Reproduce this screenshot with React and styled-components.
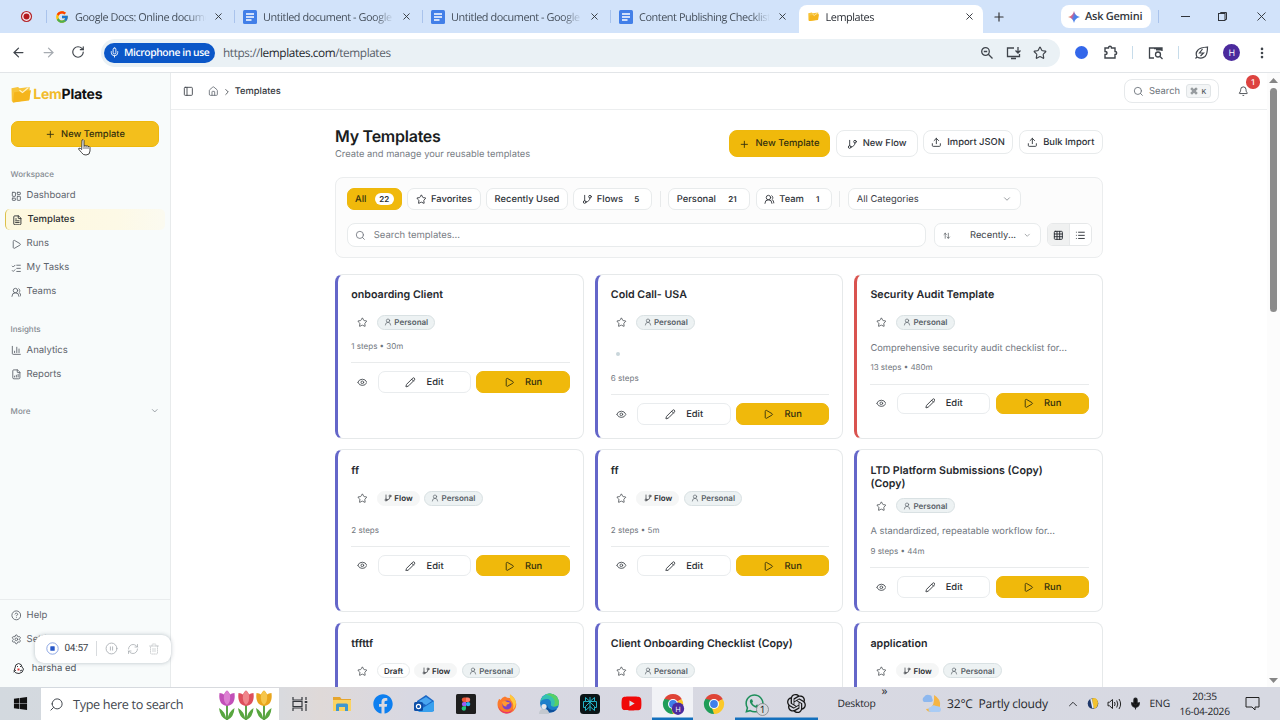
import React from "react";
import styled, { createGlobalStyle, css } from "styled-components";
import {
  ArrowLeft,
  ArrowRight,
  ArrowUpDown,
  Bell,
  ChartColumn,
  ChevronDown,
  ChevronRight,
  ChevronUp,
  CircleHelp,
  CirclePause,
  Command,
  EllipsisVertical,
  Eye,
  FileChartColumnIncreasing,
  FileText,
  GitBranch,
  Grid3x3,
  House,
  LayoutDashboard,
  List,
  ListChecks,
  Mic,
  PanelLeft,
  Pencil,
  Play,
  Plus,
  RefreshCw,
  RotateCw,
  Search,
  Settings,
  Star,
  Trash2,
  Upload,
  UserRound,
  UsersRound,
  X,
} from "lucide-react";
import { FcGoogle } from "react-icons/fc";
import { FaFacebook, FaWhatsapp, FaWindows, FaYoutube } from "react-icons/fa";
import { RiOpenaiFill } from "react-icons/ri";

const GlobalStyle = createGlobalStyle`
  * {
    box-sizing: border-box;
  }
  body {
    margin: 0;
    overflow: hidden;
    text-rendering: geometricPrecision;
  }
  button {
    text-rendering: inherit;
  }
  svg {
    display: block;
    flex: none;
  }
`;

const system = `"Open Sans", "Noto Sans", sans-serif`;

const Screen = styled.div`
  position: relative;
  width: 1280px;
  height: 720px;
  display: flex;
  flex-direction: column;
  overflow: hidden;
  background: #fff;
  font-family: Inter, sans-serif;
  color: #23272e;
`;

/* ---------- browser ---------- */

const TabStrip = styled.div`
  height: 33px;
  flex: none;
  display: flex;
  align-items: center;
  background: #d2e3fa;
  font-family: ${system};
`;

const PinnedTab = styled.div`
  width: 46px;
  padding-left: 20px;
`;

const Tab = styled.div`
  width: 188px;
  height: 33px;
  display: flex;
  align-items: center;
  gap: 6px;
  color: #46505c;
  &::before {
    content: "";
    width: 1px;
    height: 13px;
    margin-right: 2px;
    background: #a9c3ec;
  }
`;

const ActiveTab = styled.div`
  width: 184px;
  height: 28px;
  align-self: flex-end;
  margin-left: 1px;
  padding: 0 8px 5px 9px;
  display: flex;
  align-items: center;
  gap: 6.5px;
  background: #fff;
  border-radius: 8px 8px 0 0;
  color: #2b2f36;
  margin-right: 9px;
`;

const TabTitle = styled.span`
  width: 132px;
  padding-top: 1px;
  font-size: 10.9px;
  white-space: nowrap;
  overflow: hidden;
  letter-spacing: -0.45px;
  mask-image: linear-gradient(90deg, #000 112px, transparent 131px);
`;

const Gemini = styled.div`
  height: 23px;
  width: 90px;
  margin-left: auto;
  display: flex;
  align-items: center;
  gap: 5px;
  padding-left: 7px;
  border-radius: 8px;
  background: #fff;
  font-size: 11px;
  font-weight: 600;
  color: #33373d;
  letter-spacing: -0.25px;
  white-space: nowrap;
`;

const WindowButtons = styled.div`
  width: 129px;
  display: flex;
  align-items: center;
  padding-left: 7px;
  gap: 21px;
  color: #30343a;
  &::before {
    content: "";
    width: 1px;
    height: 13px;
    background: #a9c3ec;
  }
`;

const Toolbar = styled.div`
  height: 40px;
  flex: none;
  display: flex;
  align-items: center;
  padding: 0 12px 0 11px;
  border-bottom: 1px solid #e2e5e8;
  color: #3f444b;
  font-family: ${system};
`;

const NavButtons = styled.div`
  width: 90px;
  display: flex;
  gap: 15px;
`;

const AddressBar = styled.div`
  width: 959px;
  height: 28px;
  display: flex;
  align-items: center;
  padding: 0 13px 0 3px;
  border-radius: 14px;
  background: #eaf1f5;
`;

const MicChip = styled.div`
  width: 111px;
  height: 20px;
  display: flex;
  align-items: center;
  gap: 4px;
  padding-left: 5px;
  border-radius: 10px;
  background: #0b57c8;
  color: #fff;
  font-size: 10.3px;
  font-weight: 600;
  letter-spacing: -0.4px;
  white-space: nowrap;
`;

const Url = styled.div`
  margin-left: 8px;
  padding-top: 1px;
  font-size: 11.8px;
  letter-spacing: -0.4px;
  color: #5a626b;
  b {
    font-weight: 400;
    color: #23272c;
  }
`;

const AddressIcons = styled.div`
  margin-left: auto;
  display: flex;
  align-items: center;
  gap: 12px;
`;

const Extensions = styled.div`
  flex: 1;
  display: flex;
  align-items: center;
  justify-content: space-between;
  padding-left: 15px;
`;

const BlueDot = styled.span`
  width: 13px;
  height: 13px;
  border-radius: 50%;
  background: #3367ea;
`;

const ToolbarRule = styled.span`
  width: 1px;
  height: 13px;
  background: #c7dcea;
`;

const Profile = styled.span`
  width: 17px;
  height: 17px;
  display: grid;
  place-items: center;
  border-radius: 50%;
  background: #4b2a9d;
  color: #fff;
  font-size: 9px;
`;

/* ---------- app shell ---------- */

const Page = styled.div`
  height: 614px;
  display: flex;
  overflow: hidden;
`;

const Sidebar = styled.aside`
  width: 171px;
  flex: none;
  display: flex;
  flex-direction: column;
  padding: 10px 5.3px 0;
  background: #f8fbfb;
  border-right: 1px solid #e8ebec;
`;

const Brand = styled.div`
  height: 21px;
  display: flex;
  align-items: center;
  gap: 2px;
  padding: 1px 0 0 6px;
  font-size: 14px;
  font-weight: 700;
  letter-spacing: -0.25px;
  color: #111;
  span {
    color: #f2bb2b;
  }
`;

const yellow = css`
  background: #f0b90b;
  border: 1px solid #eeb80c;
  color: #33300f;
`;

const SidebarButton = styled.button`
  ${yellow}
  background: #f3bf1c;
  height: 26.7px;
  margin: 16.6px 5.3px 16.2px;
  padding: 1px 0 0;
  display: flex;
  align-items: center;
  justify-content: center;
  gap: 5.3px;
  border-radius: 7px;
  font: 500 9.35px Inter, sans-serif;
`;

const NavLabel = styled.div`
  height: 21.3px;
  display: flex;
  align-items: center;
  justify-content: space-between;
  padding: 0 5.3px;
  font-size: 8px;
  font-weight: 500;
  color: #848a91;
`;

const NavGroup = styled.nav`
  display: flex;
  flex-direction: column;
  gap: 2.7px;
  margin-bottom: 16px;
`;

const NavItem = styled.a`
  height: 21.3px;
  display: flex;
  align-items: center;
  gap: 5.3px;
  padding: 1px 5.3px 0;
  border-radius: 5px;
  font-size: 9.5px;
  color: #5e646c;
  ${(p) =>
    p.$active &&
    css`
      color: #2a2d2f;
      font-weight: 500;
      background: linear-gradient(90deg, #fdf8de, #fdf9e6 70%, #fbfaf0);
      border-left: 1.5px solid #dcc04a;
    `}
`;

const SidebarFooter = styled.div`
  margin: auto -5.3px 0;
  height: 88.5px;
  padding: 5px 5.3px 0;
  display: flex;
  flex-direction: column;
  gap: 2.7px;
  border-top: 1px solid #e9eced;
`;

const UserRow = styled.div`
  height: 32px;
  display: flex;
  align-items: center;
  gap: 6.5px;
  padding: 1px 0 0 7px;
  font-size: 9.5px;
  color: #4d535a;
`;

const Main = styled.main`
  flex: 1;
  min-width: 0;
  display: flex;
  flex-direction: column;
  overflow: hidden;
`;

const Header = styled.header`
  height: 37px;
  flex: none;
  display: flex;
  align-items: center;
  padding: 0 18px 0 11.5px;
  border-bottom: 1px solid #eceeef;
`;

const Crumbs = styled.div`
  display: flex;
  align-items: center;
  margin-left: 14.5px;
  padding-top: 1px;
  gap: 3.2px;
  font-size: 9.3px;
  font-weight: 500;
  color: #6d737a;
  b {
    color: #34383d;
    font-weight: 500;
  }
`;

const SearchButton = styled.button`
  height: 24.5px;
  width: 95px;
  margin-left: auto;
  display: flex;
  align-items: center;
  gap: 5px;
  padding: 0 7.5px 0 8px;
  border: 1px solid #e6e9eb;
  border-radius: 8px;
  background: #fff;
  color: #6c737a;
  font: 400 9.4px Inter, sans-serif;
`;

const Kbd = styled.kbd`
  height: 14px;
  width: 25px;
  margin-left: auto;
  display: flex;
  align-items: center;
  justify-content: center;
  gap: 3px;
  border: 1px solid #e0e4e6;
  border-radius: 3px;
  background: #f3f5f6;
  color: #50565c;
  font: 500 7px Inter, sans-serif;
`;

const BellButton = styled.div`
  position: relative;
  margin-left: 19px;
  color: #3b4046;
`;

const BellCount = styled.span`
  position: absolute;
  left: 8px;
  top: -10.5px;
  width: 13.4px;
  height: 13.4px;
  display: grid;
  place-items: center;
  border-radius: 50%;
  background: #dd4340;
  color: #fff;
  font-size: 8px;
  font-weight: 500;
`;

const Scrollbar = styled.div`
  width: 13px;
  flex: none;
  display: flex;
  flex-direction: column;
  align-items: center;
  padding: 5px 0 4px;
  background: #fcfcfc;
`;

const Thumb = styled.div`
  width: 7px;
  height: 224px;
  margin: 5px 0 auto;
  border-radius: 4px;
  background: #8b8b8b;
`;

const Content = styled.div`
  width: 768px;
  margin: 0 auto;
  padding-top: 20px;
  display: flex;
  flex-direction: column;
`;

const TitleRow = styled.div`
  height: 47px;
  display: flex;
  justify-content: space-between;
  align-items: flex-start;
`;

const Title = styled.h1`
  margin: -4px 0 0;
  font-size: 16px;
  line-height: 20px;
  font-weight: 600;
  letter-spacing: -0.25px;
  color: #1a1d21;
`;

const Subtitle = styled.p`
  margin: 2.2px 0 0;
  font-size: 9.35px;
  line-height: 13.3px;
  color: #777d84;
`;

const Actions = styled.div`
  display: flex;
  align-items: flex-start;
  gap: 5.3px;
`;

const ActionButton = styled.button`
  height: ${(p) => (p.$tall ? "26.7px" : "24px")};
  width: ${(p) => p.$width}px;
  padding: ${(p) => (p.$tall ? "1px 0 0" : "0")};
  display: flex;
  align-items: center;
  justify-content: center;
  gap: 5.3px;
  border: 1px solid #e8ebec;
  border-radius: 8px;
  background: #fff;
  color: #2e3238;
  font: 500 9.4px Inter, sans-serif;
  white-space: nowrap;
  ${(p) => p.$primary && yellow}
`;

const FilterPanel = styled.section`
  height: 81px;
  margin-bottom: 15.8px;
  padding: 10px 10.5px;
  border: 1px solid #ebedee;
  border-radius: 8px;
  background: #fcfcfc;
`;

const FilterRow = styled.div`
  display: flex;
  align-items: center;
  gap: ${(p) => p.$gap || "5.3px"};
  margin-bottom: 13.4px;
`;

const Chip = styled.button`
  height: 21.5px;
  width: ${(p) => p.$width}px;
  display: flex;
  align-items: center;
  padding: 0.7px 7.5px 0;
  gap: 4.5px;
  border: 1px solid #e8ebec;
  border-radius: 7px;
  background: #fff;
  color: #30343a;
  font: 500 9.4px Inter, sans-serif;
  white-space: nowrap;
  ${(p) => p.$primary && yellow}
`;

const Count = styled.span`
  min-width: 18.7px;
  height: 12px;
  margin: -1px 0 0 auto;
  display: grid;
  place-items: center;
  border-radius: 6px;
  background: #fff;
  font-size: 8px;
  font-weight: 600;
  color: #2b2f34;
`;

const Rule = styled.span`
  width: 1px;
  height: 16px;
  margin: 0 2.3px;
  background: #e8eaeb;
`;

const Select = styled.div`
  width: ${(p) => p.$width}px;
  height: ${(p) => p.$height}px;
  display: flex;
  align-items: center;
  justify-content: space-between;
  padding: 1px 8px 0;
  border: 1px solid #e8ebec;
  border-radius: 7px;
  background: #fff;
  font-size: 9.4px;
  color: #3c4147;
`;

const SearchField = styled.div`
  flex: 1;
  height: 24px;
  display: flex;
  align-items: center;
  gap: 8px;
  padding: 1px 7.5px 0;
  border: 1px solid #e8ebec;
  border-radius: 8px;
  background: #fff;
  font-size: 9.5px;
  color: #777c83;
`;

const SortValue = styled.span`
  margin: 0 -12px 0 0;
`;

const ViewToggle = styled.div`
  width: 45px;
  height: 23px;
  display: flex;
  border: 1px solid #e6e8e9;
  border-radius: 6px;
  overflow: hidden;
  background: #fff;
  margin-left: -2.3px;
`;

const ViewOption = styled.span`
  flex: 1;
  display: grid;
  place-items: center;
  background: ${(p) => (p.$active ? "#f0f1f1" : "#fff")};
  & + & {
    border-left: 1px solid #e6e8e9;
  }
`;

/* ---------- cards ---------- */

const CardGrid = styled.div`
  display: grid;
  grid-template-columns: repeat(3, 1fr);
  gap: 10.7px;
`;

const Card = styled.article`
  padding: 13px 13.3px;
  border: 1px solid #e6e9ea;
  border-left: 3px solid ${(p) => (p.$danger ? "#d9534f" : "#6466c9")};
  border-radius: 8px;
  background: #fff;
`;

const CardTitle = styled.h2`
  min-height: 18.7px;
  margin: 0 0 4.6px;
  padding-top: 0.7px;
  font-size: 10.67px;
  line-height: 13.3px;
  font-weight: 600;
  color: #25282d;
  max-width: 190px;
  min-height: 19.4px;
`;

const BadgeRow = styled.div`
  height: 21.3px;
  display: flex;
  align-items: center;
  gap: 4.2px;
  margin-bottom: 8px;
`;

const IconButton = styled.span`
  width: 21.3px;
  height: 21.3px;
  display: grid;
  place-items: center;
  color: #484d53;
`;

const Badge = styled.span`
  height: 15px;
  display: flex;
  align-items: center;
  gap: 2.4px;
  padding: 0 6.2px;
  border: 1px solid;
  border-radius: 8px;
  font-size: 8px;
  font-weight: 600;
  ${(p) =>
    ({
      personal: "background: #edf2f3; border-color: #d9e1e3; color: #596168;",
      flow: "background: #f5f6f6; border-color: #f5f6f6; color: #2b2e33;",
      draft: "background: #fff; border-color: #e8ebec; color: #2b2e33;",
    })[p.$kind]}
`;

const Description = styled.div`
  height: ${(p) => p.$height}px;
  margin-bottom: 8px;
  display: flex;
  align-items: center;
  padding-top: ${(p) => (p.$height ? "1.2px" : "0")};
  font-size: 9.35px;
  color: #72787f;
  white-space: nowrap;
`;

const Bullet = styled.span`
  width: 4px;
  height: 4px;
  margin-left: 5px;
  border-radius: 50%;
  background: #c9d6db;
`;

const Meta = styled.div`
  height: 10.7px;
  line-height: 10.7px;
  margin-bottom: 10.7px;
  font-size: 8px;
  color: #6f757c;
`;

const CardActions = styled.div`
  display: flex;
  gap: 5.3px;
  padding-top: 8px;
  border-top: 1px solid #e9ebec;
`;

const CardButton = styled.button`
  flex: 1;
  height: 21.3px;
  padding: 0.7px 0 0;
  display: flex;
  align-items: center;
  justify-content: center;
  gap: 10.5px;
  border: 1px solid #e9ecee;
  border-radius: 7px;
  background: #fff;
  color: #2b2f35;
  font: 500 9.4px Inter, sans-serif;
  ${(p) => p.$primary && yellow}
`;

/* ---------- overlays ---------- */

const Recorder = styled.div`
  position: absolute;
  left: 35px;
  top: 634.5px;
  width: 136px;
  height: 28px;
  display: flex;
  align-items: center;
  padding: 0 11px 0 10.5px;
  border-radius: 9px;
  background: #fff;
  box-shadow: 0 0 4px rgba(40, 60, 80, 0.3);
  font: 400 10px Roboto, sans-serif;
  color: #3c4147;
  svg {
    color: #a4a9ae;
  }
`;

const RecorderTime = styled.span`
  margin: 0 7.5px 0 6px;
  padding-right: 8px;
  height: 15px;
  line-height: 15px;
  letter-spacing: -0.25px;
  border-right: 1px solid #d8dbde;
`;

const RecorderIcons = styled.div`
  flex: 1;
  display: flex;
  align-items: center;
  justify-content: space-between;
`;

const Pointer = styled.svg`
  position: absolute;
  left: 77px;
  top: 138px;
`;

/* ---------- taskbar ---------- */

const Taskbar = styled.footer`
  height: 33px;
  flex: none;
  display: flex;
  align-items: center;
  background: linear-gradient(90deg, #d3d9df, #d9dade 22%, #dfd9d8 25%, #d8d8e2 32%, #d7d9e2);
  font-family: ${system};
  color: #25272b;
`;

const Start = styled.div`
  width: 41px;
  padding-left: 13px;
`;

const TaskSearch = styled.div`
  width: 238px;
  height: 32px;
  align-self: flex-end;
  display: flex;
  align-items: center;
  padding: 0 3px 0 8px;
  gap: 9px;
  background: #fff;
  font-size: 12.7px;
  letter-spacing: -0.35px;
  color: #444950;
  svg:last-child {
    margin-left: auto;
  }
`;

const Apps = styled.div`
  display: flex;
  height: 33px;
  margin-left: 0.5px;
`;

const AppSlot = styled.div`
  width: 41.4px;
  display: grid;
  place-items: center;
  background: ${(p) => (p.$active ? "#f1f2f6" : "transparent")};
  box-shadow: ${(p) => (p.$open ? "inset 0 -2.5px #1470bd" : "none")};
`;

const DesktopLabel = styled.div`
  margin-left: 20px;
  width: 64px;
  display: flex;
  align-items: center;
  gap: 6px;
  font-size: 10.3px;
  letter-spacing: -0.25px;
`;

const Overflow = styled.span`
  align-self: flex-start;
  margin-top: -15px;
  font-size: 12px;
`;

const Weather = styled.div`
  width: 145px;
  display: flex;
  align-items: center;
  gap: 5.5px;
  margin-left: 19px;
  font-size: 12.1px;
  letter-spacing: -0.25px;
  white-space: pre;
`;

const Tray = styled.div`
  width: 112px;
  display: flex;
  align-items: center;
  gap: 7.5px;
  font-size: 10.3px;
  letter-spacing: -0.2px;
`;

const Clock = styled.div`
  width: 54px;
  text-align: center;
  font-size: 10.2px;
  line-height: 15px;
  letter-spacing: -0.3px;
  margin-top: 1px;
  white-space: nowrap;
`;

function FolderIcon({ width = 20 }) {
  return (
    <svg width={width} height={width * 0.85} viewBox="0 0 20 17">
      <path d="M.5 2.2 7 1l1.5 1.3L18.6 1v12.5L2 16.5.8 15z" fill="#f7c43a" />
      <path d="M3.2 6.2 20 4.2l-2 10.2L2 16.6z" fill="#f5b51c" />
      <path d="m8.5 4.2 3 2.3 6-5" stroke="#fff3cc" strokeWidth="1.2" fill="none" />
    </svg>
  );
}

function DocIcon() {
  return (
    <svg width="14" height="14" viewBox="0 0 14 14">
      <rect width="14" height="14" rx="1.5" fill="#427fe8" />
      <path d="M3 4h8M3 7h8M3 10h5.5" stroke="#fff" strokeWidth="1.3" />
    </svg>
  );
}

function ChromeIcon({ initial }) {
  return (
    <svg width="24" height="24" viewBox="0 0 24 24">
      <path d="M12 12 3.3 7A10 10 0 0 1 20.7 7z" fill="#df4437" />
      <path d="M12 12 20.7 7A10 10 0 0 1 12 22z" fill="#fbc929" />
      <path d="M12 12v10A10 10 0 0 1 3.3 7z" fill="#1f9d58" />
      <path d="M12 7h8.7L16 8.500z" fill="#df4437" />
      <path d="m16.3 14.5-4.3 7.5-2-6z" fill="#fbc929" />
      <path d="M7.7 14.5 3.3 7l6 1z" fill="#1f9d58" />
      <circle cx="12" cy="12" r="5" fill="#fff" />
      <circle cx="12" cy="12" r="3.9" fill="#3f7fea" />
      {initial && (
        <>
          <circle cx="17" cy="16.7" r="6.2" fill="#4c2b9e" />
          <text x="17" y="19.5" textAnchor="middle" fontFamily="Open Sans, sans-serif" fontSize="7.5" fill="#fff">
            {initial}
          </text>
        </>
      )}
    </svg>
  );
}

function Tulip({ x, color, shade }) {
  return (
    <g transform={`translate(${x} 0)`}>
      <path d="M10 15v16" stroke="#4b9a35" strokeWidth="1.800" />
      <path d="M9.500 31Q8 22 2 19q1 9 7.500 12zM10.500 31q.5-8 7-12-.5 9-7 12z" fill="#58a63f" />
      <path d="M2.500 4q3 0 4.500 1.500Q8 2.500 10 1.500q2 1 3 4Q14.500 4 17.500 4q1.500 12-7.500 13Q1 16 2.500 4z" fill={color} />
      <path d="M7 6q.8-3 3-4.500Q12.200 3 13 6q1 7-3 10-4-3-3-10z" fill={shade} />
    </g>
  );
}

function Tulips() {
  return (
    <svg width="60" height="31" viewBox="0 0 60 31">
      <Tulip x={1} color="#c250b8" shade="#dd7fd2" />
      <Tulip x={20} color="#dd4f5c" shade="#f0858a" />
      <Tulip x={38} color="#e9a51d" shade="#f6c64c" />
    </svg>
  );
}

function TaskViewIcon() {
  return (
    <svg width="16" height="16" viewBox="0 0 16 16" fill="none" stroke="#34373c" strokeWidth="1.2">
      <path d="M1 1v3h9V1M1 15v-3h9v3M1 5.500h9v5H1zM14 1v3M14 8v7" />
      <path d="M12.700 6h2.600" strokeWidth="2" />
    </svg>
  );
}

function ExplorerIcon() {
  return (
    <svg width="20" height="18" viewBox="0 0 20 18">
      <path d="M1 2h7l1.5 2H19v11H1z" fill="#e6a52d" />
      <path d="M1 5h18v11H1z" fill="#fbd362" />
      <path d="M4 10q0-1.5 1.5-1.5h9Q16 8.500 16 10v6h-3v-4H7v4H4z" fill="#3f97cf" />
    </svg>
  );
}

function OutlookIcon() {
  return (
    <svg width="20" height="19" viewBox="0 0 20 19">
      <path d="m3 7 9-6 8 6v10H3z" fill="#1b66c4" />
      <path d="m5 7 7-4 6 4-6 4z" fill="#4aa6f0" />
      <path d="M4 17 20 7v9q0 2-2 2H5z" fill="#38a0ee" />
      <rect y="8" width="9" height="9" rx="1.500" fill="#0d4fa8" />
      <circle cx="4.500" cy="12.500" r="2.100" fill="none" stroke="#fff" strokeWidth="1.200" />
    </svg>
  );
}

function FigmaIcon() {
  return (
    <svg width="20" height="20" viewBox="0 0 20 20">
      <rect width="20" height="20" rx="1.5" fill="#1e1e1e" />
      <path d="M10 3.500H8a2.200 2.200 0 0 0 0 4.400h2z" fill="#ef5533" />
      <path d="M10 3.500h2a2.200 2.200 0 0 1 0 4.400h-2z" fill="#fd7a68" />
      <path d="M10 7.900H8a2.200 2.200 0 0 0 0 4.400h2z" fill="#9a5cf5" />
      <circle cx="12.100" cy="10.100" r="2.200" fill="#2bb5f3" />
      <path d="M10 12.300H8a2.200 2.200 0 1 0 2 2.200z" fill="#22c67c" />
    </svg>
  );
}

function FirefoxIcon() {
  return (
    <svg width="20" height="20" viewBox="0 0 20 20">
      <path
        d="M2 5q1 0 1.500 1Q5 3 8 2.500 10 4 13 4V.5q5 3 6 8 1.200 5-2.500 8.500Q13 20 9 19.500 3 19 1 13.500-.3 9 2 5z"
        fill="#fb7a2c"
      />
      <path d="M13 .5q5 3 6 8-.5 5-3 7 1-5-1-8-3-3-2-7z" fill="#ffc93a" />
      <path d="M1 12q3 6 9 6 4 0 6-3-2 5-7 4.500Q3 19 1 12z" fill="#e8356d" />
      <circle cx="10" cy="11" r="4.600" fill="#7a42c9" />
      <path d="M5 8q3-2 5 0l3 .5q-1 2-3 2-1 1-.5 2Q6 13 5 8z" fill="#ff9b2f" />
    </svg>
  );
}

function EdgeIcon() {
  return (
    <svg width="22" height="21" viewBox="0 0 22 21">
      <circle cx="11.500" cy="10" r="9.500" fill="#1b7fcb" />
      <path d="M2 9Q4 .5 12 .5 20 1 21 9q0 5-6 4.500-3-.5-2-3Q13 6 9 6 4 6 2 9z" fill="#35c2b1" />
      <path d="M12 .5Q20 1 21 9q0 5-6 4.500 3-3 1-7-2-4-8-5Q10 .5 12 .500z" fill="#58cf66" />
      <path d="M9 11q0 5 5 6 3 0 5-1-3 4-8 3.500Q7 17 9 11z" fill="#0d4f9b" />
      <circle cx="6" cy="13.500" r="2.600" fill="#e5e7ea" />
      <path d="M1 21q0-5 5-5t5 5z" fill="#c3c8cf" />
    </svg>
  );
}

function PerplexityIcon() {
  return (
    <svg width="20" height="20" viewBox="0 0 20 20">
      <rect width="20" height="20" rx="3.500" fill="#0a1416" />
      <path
        d="M10 3v14M10 7.500 5.500 3.500v4h-2v6h2M10 7.500l4.500-4v4h2v6h-2M10 8l-4.500 4.500v4L10 12.500M10 8l4.500 4.500v4L10 12.500M5.500 7.500h9"
        fill="none"
        stroke="#23b3c6"
        strokeWidth="1"
      />
    </svg>
  );
}

function WhatsAppTask() {
  return (
    <svg width="28" height="26" viewBox="0 0 28 26">
      <FaWhatsapp x="3" y="2" size="21" color="#1e8f5b" />
      <circle cx="21.500" cy="18.500" r="6" fill="#d5d8dc" stroke="#7b7f84" strokeWidth=".8" />
      <text x="21.500" y="22" textAnchor="middle" fontFamily="Open Sans, sans-serif" fontSize="10" fill="#222">
        1
      </text>
    </svg>
  );
}

function WeatherIcon() {
  return (
    <svg width="21" height="20" viewBox="0 0 21 20">
      <path d="M13 1q7 4 6 11-2 6-8 6-5 0-6-3 9 0 8-14z" fill="#f5b544" />
      <path d="M3 8a3 3 0 0 1 0-5q2-3 5-2 3 0 3 3 2 4-1 4z" fill="#8db8ef" />
      <path d="M10 18a2.500 2.500 0 0 1 0-5q2-3 5-1 4 0 5 3 0 3-2 3z" fill="#a9ccf5" />
    </svg>
  );
}

function BallIcon() {
  return (
    <svg width="12" height="13" viewBox="0 0 12 13">
      <circle cx="6" cy="6.500" r="5.300" fill="#20396b" />
      <path d="M5 1.500q5-2 6 4 0 5-4 6.500-2-5-2-10.500z" fill="#f2c22e" />
      <path d="m4 2 2 9" stroke="#e9eef5" strokeWidth="1.500" />
    </svg>
  );
}

function SpeakerIcon() {
  return (
    <svg width="15" height="12" viewBox="0 0 15 12" fill="none" stroke="#222" strokeWidth="1">
      <path d="M1 4.200h1.500L5.500 1.500v9L2.500 7.800H1zM7.500 4q1.200 2 0 4M9.700 2.500q2.200 3.500 0 7M12 1q3.200 5 0 10" />
    </svg>
  );
}

const workspace = [
  { label: "Dashboard", icon: LayoutDashboard },
  { label: "Templates", icon: FileText, active: true },
  { label: "Runs", icon: Play },
  { label: "My Tasks", icon: ListChecks },
  { label: "Teams", icon: UsersRound },
];

const insights = [
  { label: "Analytics", icon: ChartColumn },
  { label: "Reports", icon: FileChartColumnIncreasing },
];

const cards = [
  { title: "onboarding Client", badges: ["personal"], meta: "1 steps • 30m" },
  { title: "Cold Call- USA", badges: ["personal"], meta: "6 steps", bullet: true },
  {
    title: "Security Audit Template",
    badges: ["personal"],
    text: "Comprehensive security audit checklist for...",
    meta: "13 steps • 480m",
    danger: true,
  },
  { title: "ff", badges: ["flow", "personal"], text: "", meta: "2 steps" },
  { title: "ff", badges: ["flow", "personal"], text: "", meta: "2 steps • 5m" },
  {
    title: "LTD Platform Submissions (Copy) (Copy)",
    badges: ["personal"],
    text: "A standardized, repeatable workflow for...",
    meta: "9 steps • 44m",
  },
  { title: "tffttf", badges: ["draft", "flow", "personal"] },
  { title: "Client Onboarding Checklist (Copy)", badges: ["personal"] },
  { title: "application", badges: ["flow", "personal"] },
];

const badgeParts = {
  personal: { label: "Personal", icon: UserRound },
  flow: { label: "Flow", icon: GitBranch },
  draft: { label: "Draft" },
};

const tabs = [
  { title: "Google Docs: Online docume", icon: <FcGoogle size={14} /> },
  { title: "Untitled document - Google", icon: <DocIcon /> },
  { title: "Untitled document - Google", icon: <DocIcon /> },
  { title: "Content Publishing Checklist", icon: <DocIcon /> },
];

function Nav({ items }) {
  return items.map(({ label, icon: Icon, active }) => (
    <NavItem key={label} $active={active}>
      <Icon size={10.7} />
      {label}
    </NavItem>
  ));
}

function TemplateCard({ title, badges, text, meta, danger, bullet }) {
  return (
    <Card $danger={danger}>
      <CardTitle>{title}</CardTitle>
      <BadgeRow>
        <IconButton>
          <Star size={10.7} strokeWidth={1.8} />
        </IconButton>
        {badges.map((kind) => {
          const { label, icon: Icon } = badgeParts[kind];
          return (
            <Badge key={kind} $kind={kind}>
              {Icon && <Icon size={8} />}
              {label}
            </Badge>
          );
        })}
      </BadgeRow>
      {bullet && (
        <Description $height={24}>
          <Bullet />
        </Description>
      )}
      {text !== undefined && <Description $height={text ? 13.3 : 0}>{text}</Description>}
      {meta && (
        <>
          <Meta>{meta}</Meta>
          <CardActions>
            <IconButton>
              <Eye size={10.7} />
            </IconButton>
            <CardButton>
              <Pencil size={10.7} />
              Edit
            </CardButton>
            <CardButton $primary>
              <Play size={10.7} />
              Run
            </CardButton>
          </CardActions>
        </>
      )}
    </Card>
  );
}

function Browser() {
  return (
    <>
      <TabStrip>
        <PinnedTab>
          <svg width="13" height="13" viewBox="0 0 13 13">
            <circle cx="6.500" cy="6.500" r="5" fill="#f7e9ee" stroke="#b3262b" strokeWidth="1.200" />
            <circle cx="6.500" cy="6.500" r="3" fill="#b3191e" />
          </svg>
        </PinnedTab>
        {tabs.map((tab, i) => (
          <Tab key={i}>
            {tab.icon}
            <TabTitle>{tab.title}</TabTitle>
            <X size={11} color="#2f343a" />
          </Tab>
        ))}
        <ActiveTab>
          <FolderIcon width={11} />
          <TabTitle>Lemplates</TabTitle>
          <X size={11} />
        </ActiveTab>
        <Plus size={14} color="#333" />
        <Gemini>
          <svg width="12" height="12" viewBox="0 0 12 12">
            <defs>
              <linearGradient id="spark" x1="0" y1="0.200" x2="1" y2="0.600">
                <stop offset="0" stopColor="#e8b33c" />
                <stop offset="0.350" stopColor="#d9608a" />
                <stop offset="0.550" stopColor="#4f7fe8" />
                <stop offset="1" stopColor="#3f86ea" />
              </linearGradient>
            </defs>
            <path d="M6 0q1 5 6 6-5 1-6 6-1-5-6-6 5-1 6-6z" fill="url(#spark)" />
          </svg>
          Ask Gemini
        </Gemini>
        <WindowButtons>
          <svg width="11" height="10" viewBox="0 0 11 10">
            <path d="M1 4.500h9" stroke="#30343a" />
          </svg>
          <svg width="11" height="11" viewBox="0 0 11 11" fill="none" stroke="#30343a" style={{ marginLeft: 5 }}>
            <rect x="1.500" y="2.500" width="6.500" height="7" />
            <path d="M3.500 2.500v-1h6v7H8" />
          </svg>
          <X size={15} strokeWidth={1.5} style={{ marginLeft: 5 }} />
        </WindowButtons>
      </TabStrip>
      <Toolbar>
        <NavButtons>
          <ArrowLeft size={15} />
          <ArrowRight size={15} color="#a6abb1" />
          <RotateCw size={14} />
        </NavButtons>
        <AddressBar>
          <MicChip>
            <Mic size={11} />
            Microphone in use
          </MicChip>
          <Url>
            https://<b>lemplates.com</b>/templates
          </Url>
          <AddressIcons>
            <svg width="14" height="14" viewBox="0 0 14 14" fill="none" stroke="#3f444b" strokeWidth="1.300">
              <circle cx="5.500" cy="5.500" r="3.800" />
              <path d="m8.300 8.300 4.200 4.200M3.800 5.500h3.400" />
            </svg>
            <svg width="15" height="14" viewBox="0 0 15 14" fill="none" stroke="#3f444b" strokeWidth="1.300">
              <path d="M8 2H1.500v8.500h12V8M5 12.500h5M12 1v5.500M9.500 4.500 12 7l2.500-2.500" />
            </svg>
            <Star size={14} />
          </AddressIcons>
        </AddressBar>
        <Extensions>
          <BlueDot />
          <svg width="15" height="15" viewBox="0 0 15 15" fill="none" stroke="#3f444b" strokeWidth="1.400">
            <path d="M2 3h3.500q0-1.700 1.500-1.700T8.500 3H12v3.500q1.700 0 1.700 1.500T12 9.500V13H2V9.500q2 0 2-1.500T2 6.500z" />
          </svg>
          <ToolbarRule />
          <svg width="15" height="14" viewBox="0 0 15 14" fill="none" stroke="#3f444b" strokeWidth="1.300">
            <path d="M6 12H1.500V2H14v3M6 2.500h8" />
            <path d="M8 3.500h6" strokeWidth="2" />
            <circle cx="10" cy="8.500" r="2.500" />
            <path d="m12 10.500 2.500 2.500" />
          </svg>
          <ToolbarRule />
          <svg width="15" height="15" viewBox="0 0 15 15" fill="none" stroke="#3f444b" strokeWidth="1.200">
            <path d="M1.500 13.500 3 12q-2-4 1-7 2-2.500 9.500-3Q13.500 9 11 11.500q-3.500 3-8 .5" />
            <path d="M8.500 4 5.500 8h4l-3 3" />
          </svg>
          <Profile>H</Profile>
          <EllipsisVertical size={14} strokeWidth={2.500} style={{ marginRight: -1 }} />
        </Extensions>
      </Toolbar>
    </>
  );
}

function TemplatesPage() {
  return (
    <Content>
      <TitleRow>
        <div>
          <Title>My Templates</Title>
          <Subtitle>Create and manage your reusable templates</Subtitle>
        </div>
        <Actions>
          <ActionButton $tall $primary $width={101.7}>
            <Plus size={10.7} />
            New Template
          </ActionButton>
          <ActionButton $tall $width={82}>
            <GitBranch size={10.7} />
            New Flow
          </ActionButton>
          <ActionButton $width={90.3}>
            <Upload size={10.7} />
            Import JSON
          </ActionButton>
          <ActionButton $width={84.5}>
            <Upload size={10.7} />
            Bulk Import
          </ActionButton>
        </Actions>
      </TitleRow>
      <FilterPanel>
        <FilterRow>
          <Chip $primary $width={55.5}>
            All <Count>22</Count>
          </Chip>
          <Chip $width={73.5}>
            <Star size={10.7} />
            Favorites
          </Chip>
          <Chip $width={81.7}>Recently Used</Chip>
          <Chip $width={79}>
            <GitBranch size={10.7} />
            Flows <Count>5</Count>
          </Chip>
          <Rule />
          <Chip $width={82}>
            Personal <Count>21</Count>
          </Chip>
          <Chip $width={76}>
            <UsersRound size={10.7} />
            Team <Count>1</Count>
          </Chip>
          <Rule />
          <Select $width={173} $height={21.5}>
            All Categories
            <ChevronDown size={10} color="#85898e" />
          </Select>
        </FilterRow>
        <FilterRow $gap="8px">
          <SearchField>
            <Search size={10.7} />
            Search templates...
          </SearchField>
          <Select $width={106.5} $height={24}>
            <ArrowUpDown size={7.500} />
            <SortValue>Recently...</SortValue>
            <ChevronDown size={8.500} color="#85898e" />
          </Select>
          <ViewToggle>
            <ViewOption $active>
              <Grid3x3 size={10.7} />
            </ViewOption>
            <ViewOption>
              <List size={10.7} />
            </ViewOption>
          </ViewToggle>
        </FilterRow>
      </FilterPanel>
      <CardGrid>
        {cards.map((card, i) => (
          <TemplateCard key={i} {...card} />
        ))}
      </CardGrid>
    </Content>
  );
}

function WindowsTaskbar() {
  return (
    <Taskbar>
      <Start>
        <FaWindows size={15} color="#111" />
      </Start>
      <TaskSearch>
        <Search size={15} strokeWidth={1.600} style={{ transform: "scaleX(-1)" }} />
        Type here to search
        <Tulips />
      </TaskSearch>
      <Apps>
        <AppSlot>
          <TaskViewIcon />
        </AppSlot>
        <AppSlot>
          <ExplorerIcon />
        </AppSlot>
        <AppSlot>
          <FaFacebook size={20} color="#0d7ff0" />
        </AppSlot>
        <AppSlot>
          <OutlookIcon />
        </AppSlot>
        <AppSlot>
          <FigmaIcon />
        </AppSlot>
        <AppSlot>
          <FirefoxIcon />
        </AppSlot>
        <AppSlot>
          <EdgeIcon />
        </AppSlot>
        <AppSlot>
          <PerplexityIcon />
        </AppSlot>
        <AppSlot>
          <FaYoutube size={21} color="#f00808" />
        </AppSlot>
        <AppSlot $active $open>
          <ChromeIcon initial="H" />
        </AppSlot>
        <AppSlot>
          <ChromeIcon />
        </AppSlot>
        <AppSlot $open>
          <WhatsAppTask />
        </AppSlot>
        <AppSlot $open>
          <RiOpenaiFill size={23} color="#151515" />
        </AppSlot>
      </Apps>
      <DesktopLabel>
        Desktop <Overflow>»</Overflow>
      </DesktopLabel>
      <Weather>
        <WeatherIcon />
        {"32°C  Partly cloudy"}
      </Weather>
      <Tray>
        <ChevronUp size={14} strokeWidth={1.600} />
        <BallIcon />
        <SpeakerIcon />
        <Mic size={13} fill="#111" />
        ENG
      </Tray>
      <Clock>
        20:35
        <br />
        16-04-2026
      </Clock>
      <svg width="15" height="15" viewBox="0 0 15 15" fill="none" stroke="#222" style={{ marginLeft: 13 }}>
        <path d="M1 1.500h13v9.500h-4v3L7 11H1z" />
      </svg>
    </Taskbar>
  );
}

function App() {
  return (
    <Screen>
      <GlobalStyle />
      <Browser />
      <Page>
        <Sidebar>
          <Brand>
            <FolderIcon />
            <div>
              <span>Lem</span>Plates
            </div>
          </Brand>
          <SidebarButton>
            <Plus size={10.7} />
            New Template
          </SidebarButton>
          <NavLabel>Workspace</NavLabel>
          <NavGroup>
            <Nav items={workspace} />
          </NavGroup>
          <NavLabel>Insights</NavLabel>
          <NavGroup>
            <Nav items={insights} />
          </NavGroup>
          <NavLabel>
            More
            <ChevronDown size={9.500} />
          </NavLabel>
          <SidebarFooter>
            <NavItem>
              <CircleHelp size={10.7} />
              Help
            </NavItem>
            <NavItem>
              <Settings size={10.7} />
              Settings
            </NavItem>
            <UserRow>
              <svg width="13" height="13" viewBox="0 0 13 13" fill="none" stroke="#33363a">
                <path d="M3 6Q3 2 6.500 1.500 10 2 10 5l1.500 2Q11 11 7 11.500 3 11.500 2 9z" fill="#fff" />
                <path d="M5 4.500h1M8 4.500h1M1.500 10 4 8M8 9l2-1" />
                <path d="M5.500 7.500h2" stroke="#d33" strokeWidth="2" />
              </svg>
              harsha ed
            </UserRow>
          </SidebarFooter>
        </Sidebar>
        <Main>
          <Header>
            <PanelLeft size={10.700} color="#40454b" />
            <Crumbs>
              <House size={10.7} />
              <ChevronRight size={10} color="#40454b" />
              <b>Templates</b>
            </Crumbs>
            <SearchButton>
              <Search size={10.7} />
              Search
              <Kbd>
                <Command size={8} />K
              </Kbd>
            </SearchButton>
            <BellButton>
              <Bell size={10.7} />
              <BellCount>1</BellCount>
            </BellButton>
          </Header>
          <TemplatesPage />
        </Main>
        <Scrollbar>
          <svg width="9" height="5" viewBox="0 0 9 5">
            <path d="M0 5 4.500 0 9 5z" fill="#858585" />
          </svg>
          <Thumb />
          <svg width="9" height="5" viewBox="0 0 9 5">
            <path d="m0 0 4.500 5L9 0z" fill="#858585" />
          </svg>
        </Scrollbar>
      </Page>
      <WindowsTaskbar />
      <Recorder>
        <svg width="13" height="13" viewBox="0 0 13 13">
          <circle cx="6.500" cy="6.500" r="5.700" fill="#fff" stroke="#7292dd" strokeWidth="0.800" />
          <rect x="4.300" y="4.300" width="4.400" height="4.400" rx="0.500" fill="#2757c8" />
        </svg>
        <RecorderTime>04:57</RecorderTime>
        <RecorderIcons>
          <CirclePause size={13} strokeWidth={1.500} />
          <RefreshCw size={12} strokeWidth={1.500} />
          <Trash2 size={12} strokeWidth={1.500} strokeDasharray="2 2" opacity={0.7} />
        </RecorderIcons>
      </Recorder>
      <Pointer width="14" height="18" viewBox="0 0 14 18">
        <path
          d="M5 2q1.300-1 2 .500V8q1.500-.8 2 0 1.500-.7 2 .5 1.500-.300 2 .800V13q0 4-4 4-3 .200-4.500-2.500L1.500 11q0-1.500 2-.5l1.200 1z"
          fill="#fff"
          stroke="#333"
          strokeWidth="0.900"
        />
        <path d="M7 8v3M9 8.200V11M11 8.800V11" stroke="#333" strokeWidth="0.700" />
      </Pointer>
    </Screen>
  );
}

export default App;
